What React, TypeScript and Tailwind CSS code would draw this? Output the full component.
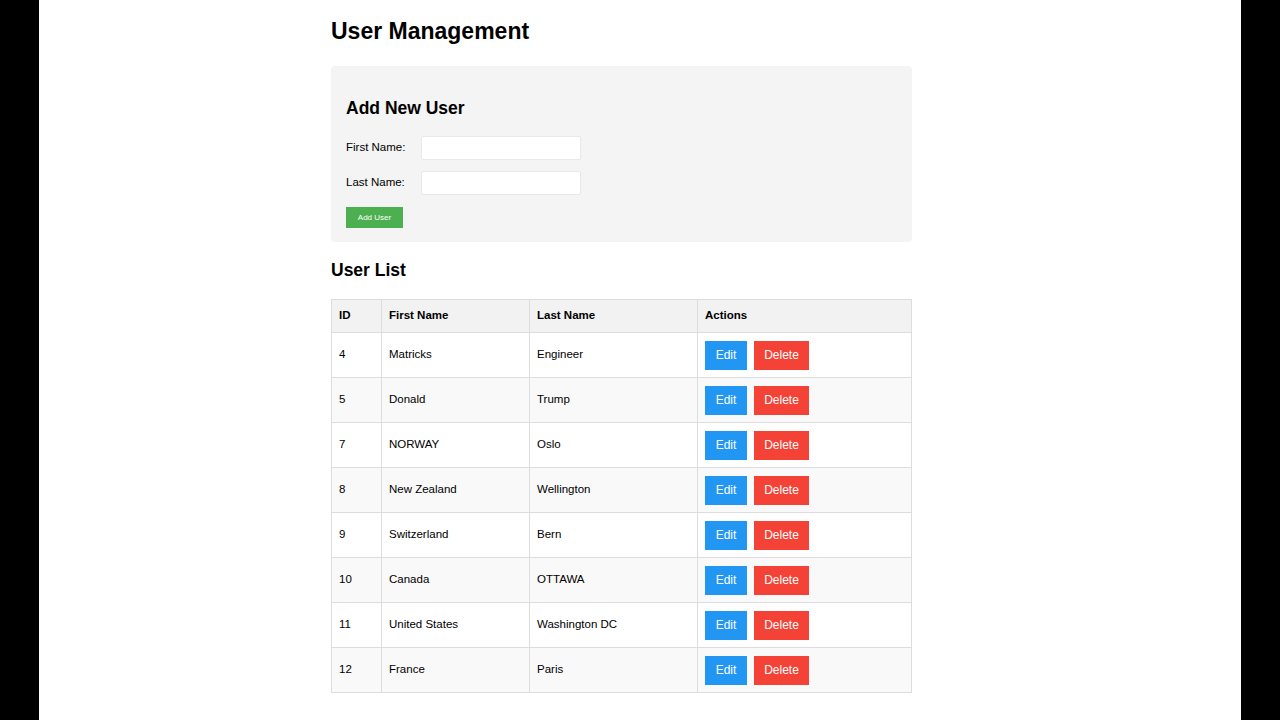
const users = [
  { id: 4, first: 'Matricks', last: 'Engineer' },
  { id: 5, first: 'Donald', last: 'Trump' },
  { id: 7, first: 'NORWAY', last: 'Oslo' },
  { id: 8, first: 'New Zealand', last: 'Wellington' },
  { id: 9, first: 'Switzerland', last: 'Bern' },
  { id: 10, first: 'Canada', last: 'OTTAWA' },
  { id: 11, first: 'United States', last: 'Washington DC' },
  { id: 12, first: 'France', last: 'Paris' },
]

export default function App() {
  return (
    <div className="flex h-[720px] w-[1280px] bg-black font-['Liberation_Sans',Arial,sans-serif] text-black">
      <div className="mx-[39px] flex-1 overflow-hidden bg-white">
        <div className="ml-[292px] w-[581px]">
          <h1 className="mt-[18px] text-[23px] font-bold leading-[27px]">User Management</h1>

          {/* Add form */}
          <div className="mt-[21px] h-[176px] rounded-[4px] bg-[#f4f4f4] px-[15px] pt-[32px]">
            <h2 className="text-[17.5px] font-bold leading-[21px]">Add New User</h2>
            <div className="mt-[17px] flex items-center">
              <label className="w-[75px] text-[11.5px]">First Name:</label>
              <input className="h-[24px] w-[160px] rounded-[2px] border border-[#e8e8e8] bg-white outline-none" />
            </div>
            <div className="mt-[11px] flex items-center">
              <label className="w-[75px] text-[11.5px]">Last Name:</label>
              <input className="h-[24px] w-[160px] rounded-[2px] border border-[#e8e8e8] bg-white outline-none" />
            </div>
            <button className="mt-[12px] flex h-[21px] w-[57px] items-center justify-center bg-[#4caf50] text-[8px] text-white">
              Add User
            </button>
          </div>

          <h2 className="mt-[18px] text-[17.5px] font-bold leading-[21px]">User List</h2>

          {/* Table */}
          <table className="mt-[18px] w-[581px] border-collapse text-[11.5px]">
            <thead>
              <tr className="h-[33px] bg-[#f2f2f2] text-left">
                <th className="w-[50px] border border-[#dddddd] px-[7px] font-bold">ID</th>
                <th className="w-[148px] border border-[#dddddd] px-[7px] font-bold">First Name</th>
                <th className="w-[168px] border border-[#dddddd] px-[7px] font-bold">Last Name</th>
                <th className="border border-[#dddddd] px-[7px] font-bold">Actions</th>
              </tr>
            </thead>
            <tbody>
              {users.map((u, i) => (
                <tr key={u.id} className={i % 2 === 1 ? 'h-[45px] bg-[#f9f9f9]' : 'h-[45px] bg-white'}>
                  <td className="border border-[#dddddd] px-[7px]">{u.id}</td>
                  <td className="border border-[#dddddd] px-[7px]">{u.first}</td>
                  <td className="border border-[#dddddd] px-[7px]">{u.last}</td>
                  <td className="border border-[#dddddd] px-[7px]">
                    <div className="flex gap-[7px]">
                      <button className="flex h-[29px] w-[42px] items-center justify-center bg-[#2196f3] text-[12px] text-white">Edit</button>
                      <button className="flex h-[29px] w-[55px] items-center justify-center bg-[#f44336] text-[12px] text-white">Delete</button>
                    </div>
                  </td>
                </tr>
              ))}
            </tbody>
          </table>
        </div>
      </div>
    </div>
  )
}
